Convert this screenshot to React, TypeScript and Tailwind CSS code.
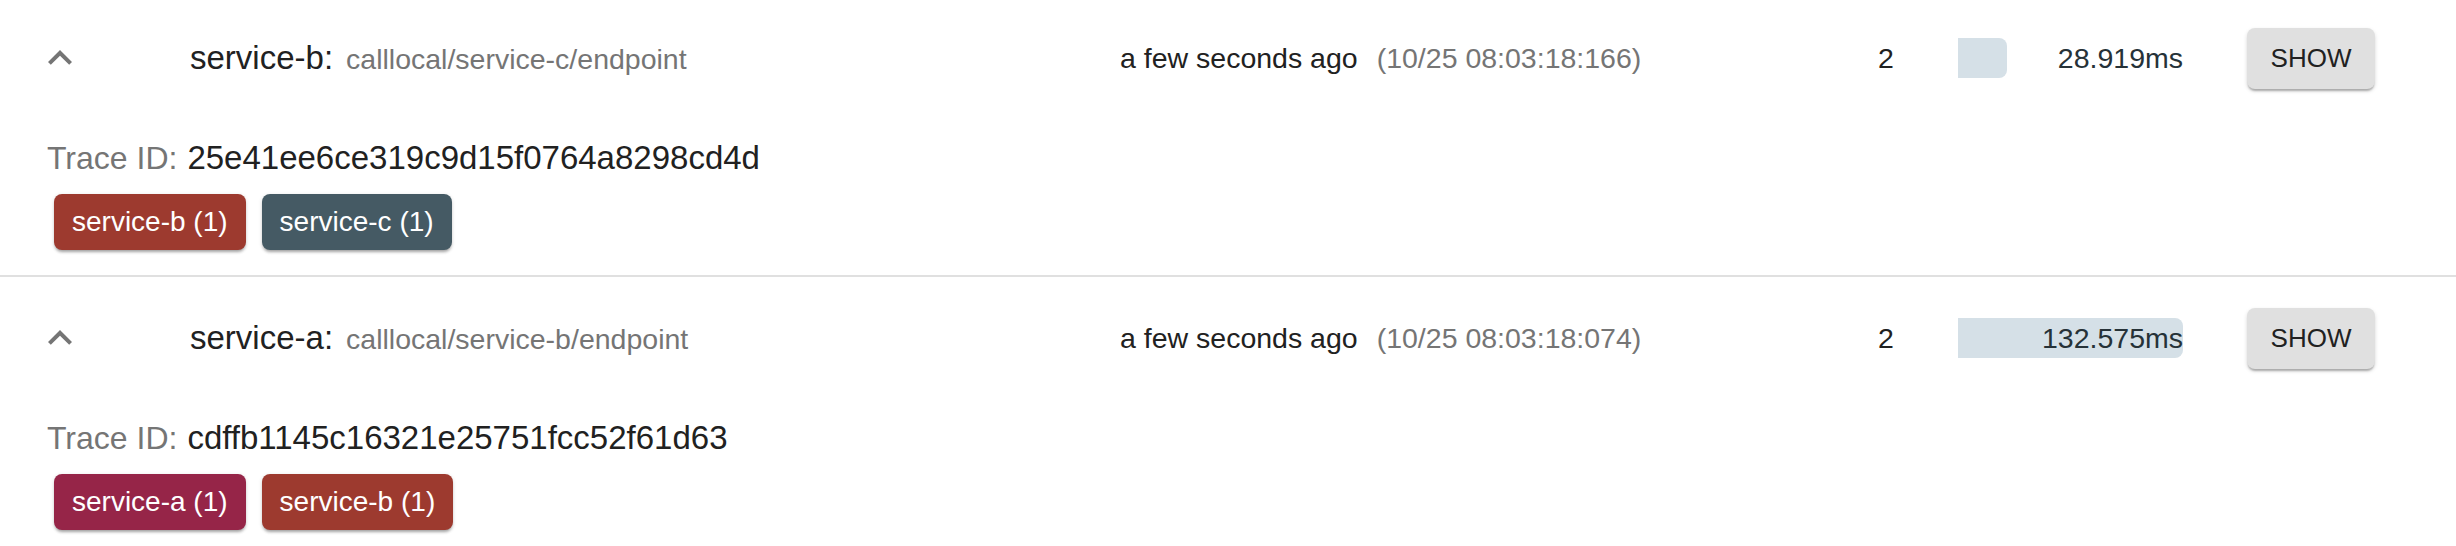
import React from "react";

type Tag = { name: string; count: number; color: string };

type Trace = {
  service: string;
  spanName: string;
  ago: string;
  timestamp: string;
  spans: number;
  duration: number;
  traceId: string;
  tags: Tag[];
};

const traces: Trace[] = [
  {
    service: "service-b",
    spanName: "calllocal/service-c/endpoint",
    ago: "a few seconds ago",
    timestamp: "(10/25 08:03:18:166)",
    spans: 2,
    duration: 28.919,
    traceId: "25e41ee6ce319c9d15f0764a8298cd4d",
    tags: [
      { name: "service-b", count: 1, color: "bg-[#9d3a2f]" },
      { name: "service-c", count: 1, color: "bg-[#455a64]" },
    ],
  },
  {
    service: "service-a",
    spanName: "calllocal/service-b/endpoint",
    ago: "a few seconds ago",
    timestamp: "(10/25 08:03:18:074)",
    spans: 2,
    duration: 132.575,
    traceId: "cdffb1145c16321e25751fcc52f61d63",
    tags: [
      { name: "service-a", count: 1, color: "bg-[#962548]" },
      { name: "service-b", count: 1, color: "bg-[#9d3a2f]" },
    ],
  },
];

const maxDuration = Math.max(...traces.map((t) => t.duration));

function ExpandLess() {
  return (
    <svg viewBox="0 0 24 24" className="h-[48px] w-[48px] fill-[#757575]">
      <path d="M12 8l-6 6 1.41 1.41L12 10.83l4.59 4.58L18 14z" />
    </svg>
  );
}

function TraceRow({ trace }: { trace: Trace }) {
  const barWidth = (trace.duration / maxDuration) * 225;
  return (
    <div className="border-b-2 border-[#e0e0e0]">
      <div className="flex h-[122px] items-center">
        <div className="flex w-[190px] pl-[36px]">
          <ExpandLess />
        </div>
        <div className="flex w-[930px] items-baseline">
          <span className="text-[33px] text-[#212121]">{trace.service}:</span>
          <span className="ml-[13px] text-[28.5px] text-[#757575]">{trace.spanName}</span>
        </div>
        <div className="flex w-[758px] items-baseline text-[28.5px]">
          <span className="text-[#212121]">{trace.ago}</span>
          <span className="ml-[19px] text-[#757575]">{trace.timestamp}</span>
        </div>
        <div className="w-[80px] text-[28.5px] text-[#212121]">{trace.spans}</div>
        <div className="relative flex h-[40px] w-[225px] items-center justify-end">
          <div
            className="absolute left-0 top-0 h-full rounded-r-[8px] bg-[#d5e0e7]"
            style={{ width: `${barWidth}px` }}
          />
          <span className="relative text-[28.5px] text-[#263238]">
            {trace.duration.toFixed(3)}ms
          </span>
        </div>
        <button className="ml-[64px] flex h-[61px] w-[128px] items-center justify-center rounded-[8px] bg-[#e0e0e0] text-[26px] text-[#212121] shadow-[0_3px_2px_-1px_rgba(0,0,0,0.25),0_2px_4px_rgba(0,0,0,0.14)]">
          SHOW
        </button>
      </div>
      <div className="mt-[23px] flex items-baseline pl-[47px] leading-[32px]">
        <span className="text-[32px] text-[#757575]">Trace ID:</span>
        <span className="ml-[10px] text-[33px] text-[#212121]">{trace.traceId}</span>
      </div>
      <div className="mt-[12px] flex pb-[17px] pl-[46px]">
        {trace.tags.map((tag) => (
          <div
            key={tag.name}
            className={`m-[8px] flex h-[56px] items-center rounded-[8px] px-[18px] text-[28px] text-white shadow-[0_3px_3px_-1px_rgba(0,0,0,0.3),0_1px_4px_rgba(0,0,0,0.12)] ${tag.color}`}
          >
            {tag.name} ({tag.count})
          </div>
        ))}
      </div>
    </div>
  );
}

export default function App() {
  return (
    <div className="h-[546px] w-[2456px] overflow-hidden bg-white font-['Liberation_Sans',Arial,sans-serif]">
      <div className="-mt-[3px]">
        {traces.map((trace) => (
          <TraceRow key={trace.traceId} trace={trace} />
        ))}
      </div>
    </div>
  );
}
